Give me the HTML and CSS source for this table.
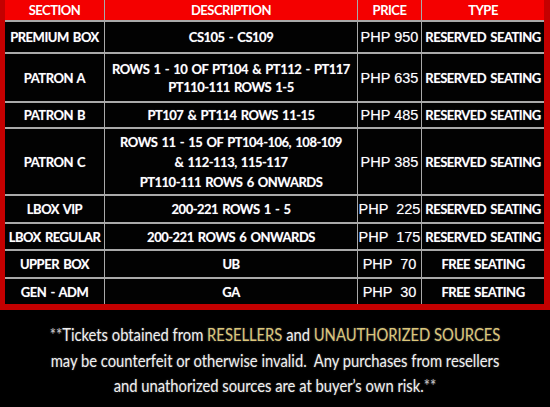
FILE: index.html
```html
<!DOCTYPE html>
<html>
<head>
<meta charset="utf-8">
<link rel="stylesheet" href="styles.css">
</head>
<body>
<div class="frame">
  <div class="grid">
    <div class="cell head">SECTION</div>
    <div class="cell head">DESCRIPTION</div>
    <div class="cell head">PRICE</div>
    <div class="cell head">TYPE</div>

    <div class="cell">PREMIUM BOX</div>
    <div class="cell">CS105 - CS109</div>
    <div class="cell price">PHP 950</div>
    <div class="cell">RESERVED SEATING</div>

    <div class="cell">PATRON A</div>
    <div class="cell">ROWS 1 - 10 OF PT104 &amp; PT112 - PT117<br>PT110-111 ROWS 1-5</div>
    <div class="cell price">PHP 635</div>
    <div class="cell">RESERVED SEATING</div>

    <div class="cell">PATRON B</div>
    <div class="cell">PT107 &amp; PT114 ROWS 11-15</div>
    <div class="cell price">PHP 485</div>
    <div class="cell">RESERVED SEATING</div>

    <div class="cell">PATRON C</div>
    <div class="cell tall">ROWS 11 - 15 OF PT104-106, 108-109<br>&amp; 112-113, 115-117<br>PT110-111 ROWS 6 ONWARDS</div>
    <div class="cell price">PHP 385</div>
    <div class="cell">RESERVED SEATING</div>

    <div class="cell">LBOX VIP</div>
    <div class="cell">200-221 ROWS 1 - 5</div>
    <div class="cell price">PHP  225</div>
    <div class="cell">RESERVED SEATING</div>

    <div class="cell">LBOX REGULAR</div>
    <div class="cell">200-221 ROWS 6 ONWARDS</div>
    <div class="cell price">PHP  175</div>
    <div class="cell">RESERVED SEATING</div>

    <div class="cell">UPPER BOX</div>
    <div class="cell">UB</div>
    <div class="cell price">PHP  70</div>
    <div class="cell">FREE SEATING</div>

    <div class="cell">GEN - ADM</div>
    <div class="cell">GA</div>
    <div class="cell price">PHP  30</div>
    <div class="cell">FREE SEATING</div>
  </div>
</div>
<div class="note">
  <p class="line"><span class="ast">**</span>Tickets obtained from <span class="gold">RESELLERS</span> and <span class="gold">UNAUTHORIZED SOURCES</span></p>
  <p class="line">may be counterfeit or otherwise invalid.&nbsp; Any purchases from resellers</p>
  <p class="line">and unathorized sources are at buyer’s own risk.<span class="ast">**</span></p>
</div>
</body>
</html>
```

FILE: styles.css
```css
html, body {
  margin: 0;
  padding: 0;
  background: #000;
}
body {
  width: 550px;
  height: 407px;
  overflow: hidden;
}
.frame {
  background: #c40000;
  padding: 0 6px 6px 5px;
}
.grid {
  display: grid;
  grid-template-columns: 99px 252px 63px 122px;
  grid-template-rows: 20px 30px 47px 24px 65px 26px 25px 26px 25px;
  column-gap: 1px;
  row-gap: 2px;
  background: #a9a9a9;
}
.cell {
  background: #020202;
  color: #fff;
  font-family: Lato, "Open Sans", sans-serif;
  font-weight: 700;
  font-size: 13px;
  letter-spacing: -0.5px;
  word-spacing: 1.5px;
  line-height: 18px;
  display: flex;
  align-items: center;
  justify-content: center;
  text-align: center;
  white-space: nowrap;
  text-shadow: 0 0 1px #667;
}
.cell.tall {
  line-height: 20px;
}
.cell.head {
  background: #f40000;
  text-shadow: none;
}
.cell.price {
  font-family: "Liberation Sans", Arial, sans-serif;
  font-weight: 400;
  font-size: 14.5px;
  letter-spacing: 0;
  word-spacing: 0;
  white-space: pre;
  overflow: visible;
}
.note {
  padding-top: 12px;
  text-align: center;
  font-family: Lato, "Open Sans", sans-serif;
  color: #f0f0f0;
  font-size: 18px;
  text-shadow: 0 0 2px rgba(255,255,255,0.35);
}
.line {
  margin: 0;
  line-height: 25.5px;
  white-space: nowrap;
  transform: scaleX(0.82);
}
.gold {
  color: #dcc679;
}
.ast {
  color: #c8c8c8;
}
```
